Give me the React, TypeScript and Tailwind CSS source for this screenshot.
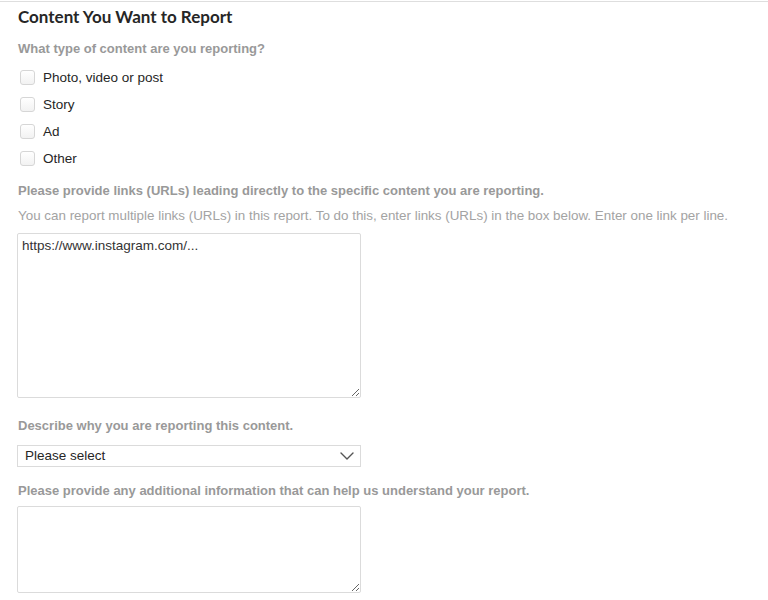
const contentTypes = ['Photo, video or post', 'Story', 'Ad', 'Other'];

export default function App() {
  return (
    <div className="min-h-screen bg-white pt-px font-['Liberation_Sans',Arial,sans-serif] text-[#262626]">
      <div className="border-t border-[#dedede] px-[17px]">
        <h2 className="mt-[5px] pl-px font-['Lato','Liberation_Sans',sans-serif] text-[17px] leading-[20px] font-bold">
          Content You Want to Report
        </h2>

        <p className="mt-[14px] pl-px text-[13px] leading-4 font-bold text-[#999999]">
          What type of content are you reporting?
        </p>
        <ul className="mt-[7px]">
          {contentTypes.map((label) => (
            <li key={label} className="flex h-[27px] items-center gap-[8px] pl-[3px]">
              <span className="h-[15px] w-[15px] rounded-[3px] border border-[#d6d6d6] bg-gradient-to-b from-white to-[#f2f2f2]" />
              <span className="text-[13.5px] leading-4">{label}</span>
            </li>
          ))}
        </ul>

        <p className="mt-[11px] pl-px text-[13px] leading-4 font-bold text-[#999999]">
          Please provide links (URLs) leading directly to the specific content you are reporting.
        </p>
        <p className="mt-[9px] pl-px text-[13.4px] leading-4 text-[#a3a3a3]">
          You can report multiple links (URLs) in this report. To do this, enter links (URLs) in the box below. Enter one link per line.
        </p>
        <textarea
          defaultValue="https://www.instagram.com/..."
          className="mt-[9px] block h-[165px] w-[344px] rounded-[2px] border border-[#dbdbdb] px-[4px] py-[4px] text-[13.5px] leading-4 text-[#333333] outline-none"
        />

        <p className="mt-[20px] pl-px text-[13px] leading-4 font-bold text-[#999999]">
          Describe why you are reporting this content.
        </p>
        <div className="mt-[11px] flex h-[22px] w-[344px] items-center justify-between border border-[#dbdbdb] pr-[5px] pl-[7px]">
          <span className="text-[13.5px] leading-4 text-[#262626]">Please select</span>
          <svg width="14" height="8" viewBox="0 0 14 8" fill="none" className="mr-px">
            <polyline points="1,1 7,7 13,1" stroke="#555555" strokeWidth="1.4" strokeLinecap="round" strokeLinejoin="round" />
          </svg>
        </div>

        <p className="mt-[16px] pl-px text-[13px] leading-4 font-bold text-[#999999]">
          Please provide any additional information that can help us understand your report.
        </p>
        <textarea className="mt-[7px] block h-[87px] w-[344px] rounded-[2px] border border-[#dbdbdb] px-[4px] py-[4px] text-[13px] outline-none" />
      </div>
    </div>
  );
}
